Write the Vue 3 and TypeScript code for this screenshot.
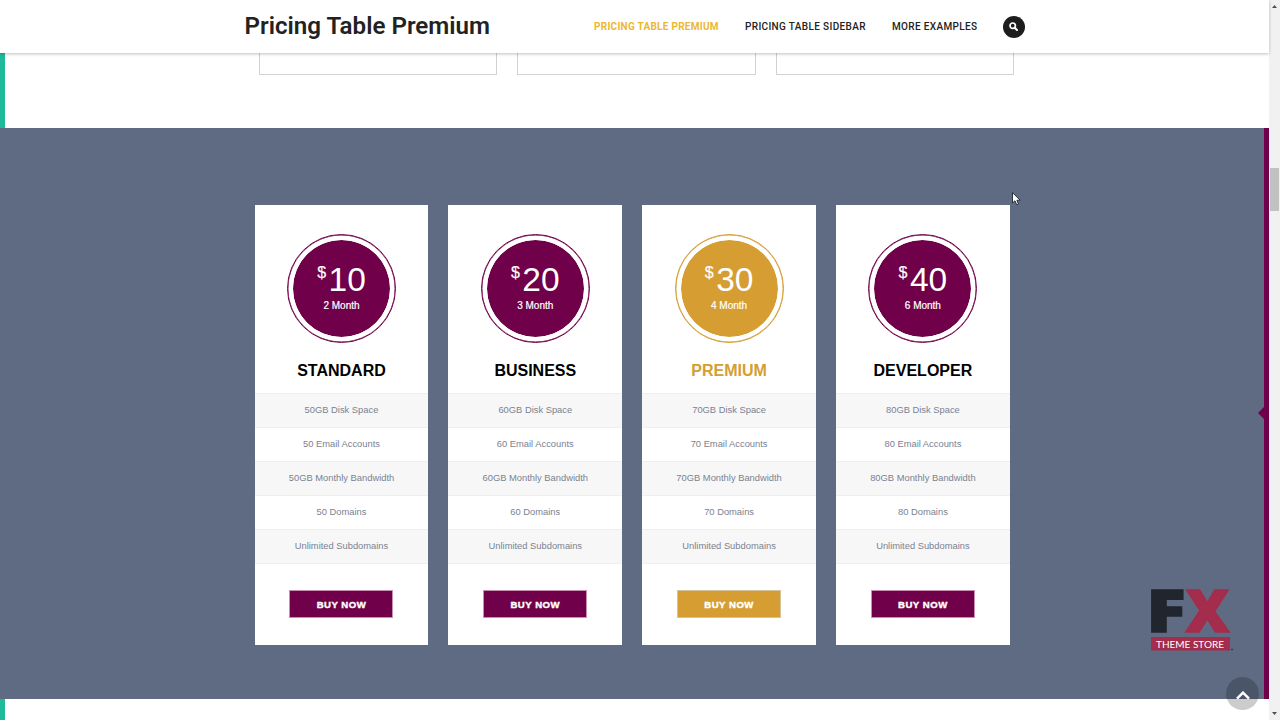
<template>
	<div class="window">
		<div class="page">
			<header class="topbar">
				<h1 class="brand">Pricing Table Premium</h1>
				<nav class="menu">
					<a v-for="(link, i) of links" :key="link" :class="{ active: i === 0 }">{{ link }}</a>
				</nav>
				<button class="search" aria-label="Search">
					<svg width="9" height="9" viewBox="0 0 9 9">
						<circle cx="3.7" cy="3.7" r="2.7" fill="none" stroke="#fff" stroke-width="1.7"/>
						<path d="M5.7 5.7L8 8" stroke="#fff" stroke-width="2" stroke-linecap="round"/>
					</svg>
				</button>
			</header>

			<section class="previous">
				<div v-for="n of 3" :key="n" class="outline"></div>
			</section>

			<main class="pricing">
				<article v-for="plan of plans" :key="plan.name" class="card" :class="{ featured: plan.featured }">
					<div class="ring">
						<div class="disc">
							<div class="price"><span class="currency">$</span><span>{{ plan.price }}</span></div>
							<div class="period">{{ plan.months }} Month</div>
						</div>
					</div>
					<h2>{{ plan.name }}</h2>
					<ul>
						<li>{{ plan.size }}GB Disk Space</li>
						<li>{{ plan.size }} Email Accounts</li>
						<li>{{ plan.size }}GB Monthly Bandwidth</li>
						<li>{{ plan.size }} Domains</li>
						<li>Unlimited Subdomains</li>
					</ul>
					<button class="buy">BUY NOW</button>
				</article>
			</main>

			<section class="next"></section>
		</div>

		<div class="scrollbar">
			<svg class="arrow" width="5" height="3" viewBox="0 0 5 3"><path d="M2.5 0L5 3H0z"/></svg>
			<div class="thumb"></div>
			<svg class="arrow down" width="5" height="3" viewBox="0 0 5 3"><path d="M0 0H5L2.5 3z"/></svg>
		</div>

		<svg class="logo" width="84" height="64" viewBox="0 0 84 64">
			<text class="letter" x="-3.6" y="44" textLength="39" lengthAdjust="spacingAndGlyphs" fill="#20252e" stroke="#20252e">F</text>
			<text class="letter" x="35.7" y="44" textLength="43.6" lengthAdjust="spacingAndGlyphs" fill="#a42c4c" stroke="#a42c4c">X</text>
			<rect x="1" y="49" width="79" height="13.5" fill="#a42c4c"/>
			<text class="store" x="6" y="59.6" textLength="68" lengthAdjust="spacingAndGlyphs">THEME STORE</text>
			<circle cx="82" cy="61.5" r="0.8" fill="#20252e"/>
		</svg>

		<button class="to-top" aria-label="Back to top">
			<svg width="14" height="9" viewBox="0 0 14 9"><path d="M1 7.7L7 1.7L13 7.7" fill="none" stroke="#fff" stroke-width="2.5"/></svg>
		</button>

		<svg class="cursor" width="9" height="14" viewBox="0 0 9 14">
			<path d="M.5 .7V11L3 8.8L4.7 12.7L6.5 12L4.9 8.2H8.2z" fill="#fff" stroke="#1b2230" stroke-width=".9"/>
		</svg>
	</div>
</template>

<script lang="ts" setup>
interface Plan {
	name: string
	price: number
	months: number
	size: number
	featured?: boolean
}

const links = ['PRICING TABLE PREMIUM', 'PRICING TABLE SIDEBAR', 'MORE EXAMPLES']

const plans: Plan[] = [
	{ name: 'STANDARD', price: 10, months: 2, size: 50 },
	{ name: 'BUSINESS', price: 20, months: 3, size: 60 },
	{ name: 'PREMIUM', price: 30, months: 4, size: 70, featured: true },
	{ name: 'DEVELOPER', price: 40, months: 6, size: 80 },
]
</script>

<style>
body {
	margin: 0;
	overflow: hidden;
}
</style>

<style scoped>
.window {
	position: relative;
	display: flex;
	width: 1280px;
	height: 720px;
	overflow: hidden;
	background: #fff;
	font-family: "Liberation Sans", Arial, sans-serif;
}

.window * {
	box-sizing: border-box;
}

.page {
	display: flex;
	flex-direction: column;
	width: 1269px;
}

.topbar {
	display: flex;
	align-items: center;
	flex: none;
	height: 53px;
	padding-left: 244.5px;
	background: #fff;
	box-shadow: 0 1px 3px rgba(0, 0, 0, .25);
	z-index: 1;
}

.brand {
	width: 349.5px;
	margin: 0;
	font: 600 24.15px/53px Roboto, sans-serif;
	color: #222;
	white-space: nowrap;
}

.menu {
	display: flex;
	width: 408.5px;
	gap: 26.2px;
	font: 500 10px/53px Roboto, sans-serif;
	letter-spacing: .35px;
	color: #222;
	white-space: nowrap;
}

.menu .active {
	font-weight: 700;
	letter-spacing: .27px;
	color: #ecb731;
}

button {
	display: flex;
	align-items: center;
	justify-content: center;
	padding: 0;
	border: 0;
}

.search {
	width: 22px;
	height: 22px;
	border-radius: 50%;
	background: #1d1d1d;
}

.search svg {
	margin-right: 1px;
}

.previous {
	display: flex;
	flex: none;
	gap: 20px;
	height: 75px;
	padding-left: 254px;
	border-left: 5px solid #1fba9b;
}

.outline {
	width: 238.4px;
	height: 22px;
	border: 1px solid #d2d2d2;
	border-top: 0;
}

.pricing {
	position: relative;
	display: flex;
	flex: none;
	gap: 20px;
	height: 571px;
	padding: 77px 0 54px 254.6px;
	border-right: 5px solid #700049;
	background: #5e6b82;
}

.pricing::after {
	content: "";
	position: absolute;
	top: 279px;
	right: 0;
	border: 6px solid transparent;
	border-right-color: #700049;
	border-left: 0;
}

.card {
	display: flex;
	flex-direction: column;
	align-items: center;
	width: 173.8px;
	height: 440px;
	padding-top: 29px;
	background: #fff;
}

.ring {
	width: 109px;
	height: 109px;
	padding: 4px;
	border: 1.5px solid #700049;
	border-radius: 50%;
	box-shadow: inset 0 0 0 .4px #700049;
}

.disc {
	height: 99px;
	padding-top: 21px;
	border: .5px solid #fff;
	border-radius: 50%;
	background: #700049;
	background-clip: padding-box;
	color: #fff;
	text-align: center;
}

.price {
	display: flex;
	justify-content: center;
	gap: 2.5px;
	height: 38px;
	font-size: 33.5px;
	line-height: 38px;
}

.currency {
	font-size: 16px;
	line-height: 23px;
	-webkit-text-stroke: .2px #fff;
}

.period {
	font-size: 10px;
	line-height: 14px;
	-webkit-text-stroke: .2px #fff;
}

h2 {
	margin: 16px 0 10px;
	font-size: 16px;
	line-height: 24px;
	color: #000;
}

ul {
	width: 100%;
	margin: 0;
	padding: 0;
	list-style: none;
	border-bottom: 1px solid #eee;
}

li {
	height: 34px;
	border-top: 1px solid #eee;
	font-size: 9.35px;
	line-height: 33px;
	color: #7b8291;
	text-align: center;
}

li:nth-child(odd) {
	background: #f7f7f7;
}

.buy {
	width: 104px;
	height: 28px;
	margin-top: 26px;
	border: 1px solid #c98fb2;
	background: #700049;
	font: 700 9.6px "Liberation Sans", Arial, sans-serif;
	letter-spacing: .5px;
	color: #fff;
	-webkit-text-stroke: .4px #fff;
}

.featured .ring {
	border-color: #d59d32;
	box-shadow: inset 0 0 0 .4px #d59d32;
}

.featured .disc {
	background-color: #d59d32;
}

.featured h2 {
	color: #d59d32;
}

.featured .buy {
	border-color: #d5c39c;
	background: #d59d32;
}

.next {
	flex: 1;
	border-left: 5px solid #1fba9b;
}

.scrollbar {
	display: flex;
	flex-direction: column;
	align-items: center;
	width: 11px;
	padding: 5px 0;
	background: #f1f1f1;
}

.arrow {
	fill: #505050;
}

.thumb {
	width: 9px;
	height: 43px;
	margin-top: 160px;
	background: #c1c1c1;
}

.down {
	margin-top: auto;
}

.logo {
	position: absolute;
	top: 588px;
	left: 1150px;
	overflow: visible;
}

.letter {
	font: 800 58.5px "Open Sans", sans-serif;
	stroke-width: 1.6px;
}

.store {
	font: 400 10px Lato, sans-serif;
	fill: #fff;
}

.to-top {
	position: absolute;
	top: 677px;
	left: 1226px;
	width: 33px;
	height: 33px;
	border-radius: 50%;
	background: rgba(0, 0, 0, .2);
}

.to-top svg {
	margin-top: 3px;
}

.cursor {
	position: absolute;
	top: 192px;
	left: 1012px;
	z-index: 2;
}
</style>
